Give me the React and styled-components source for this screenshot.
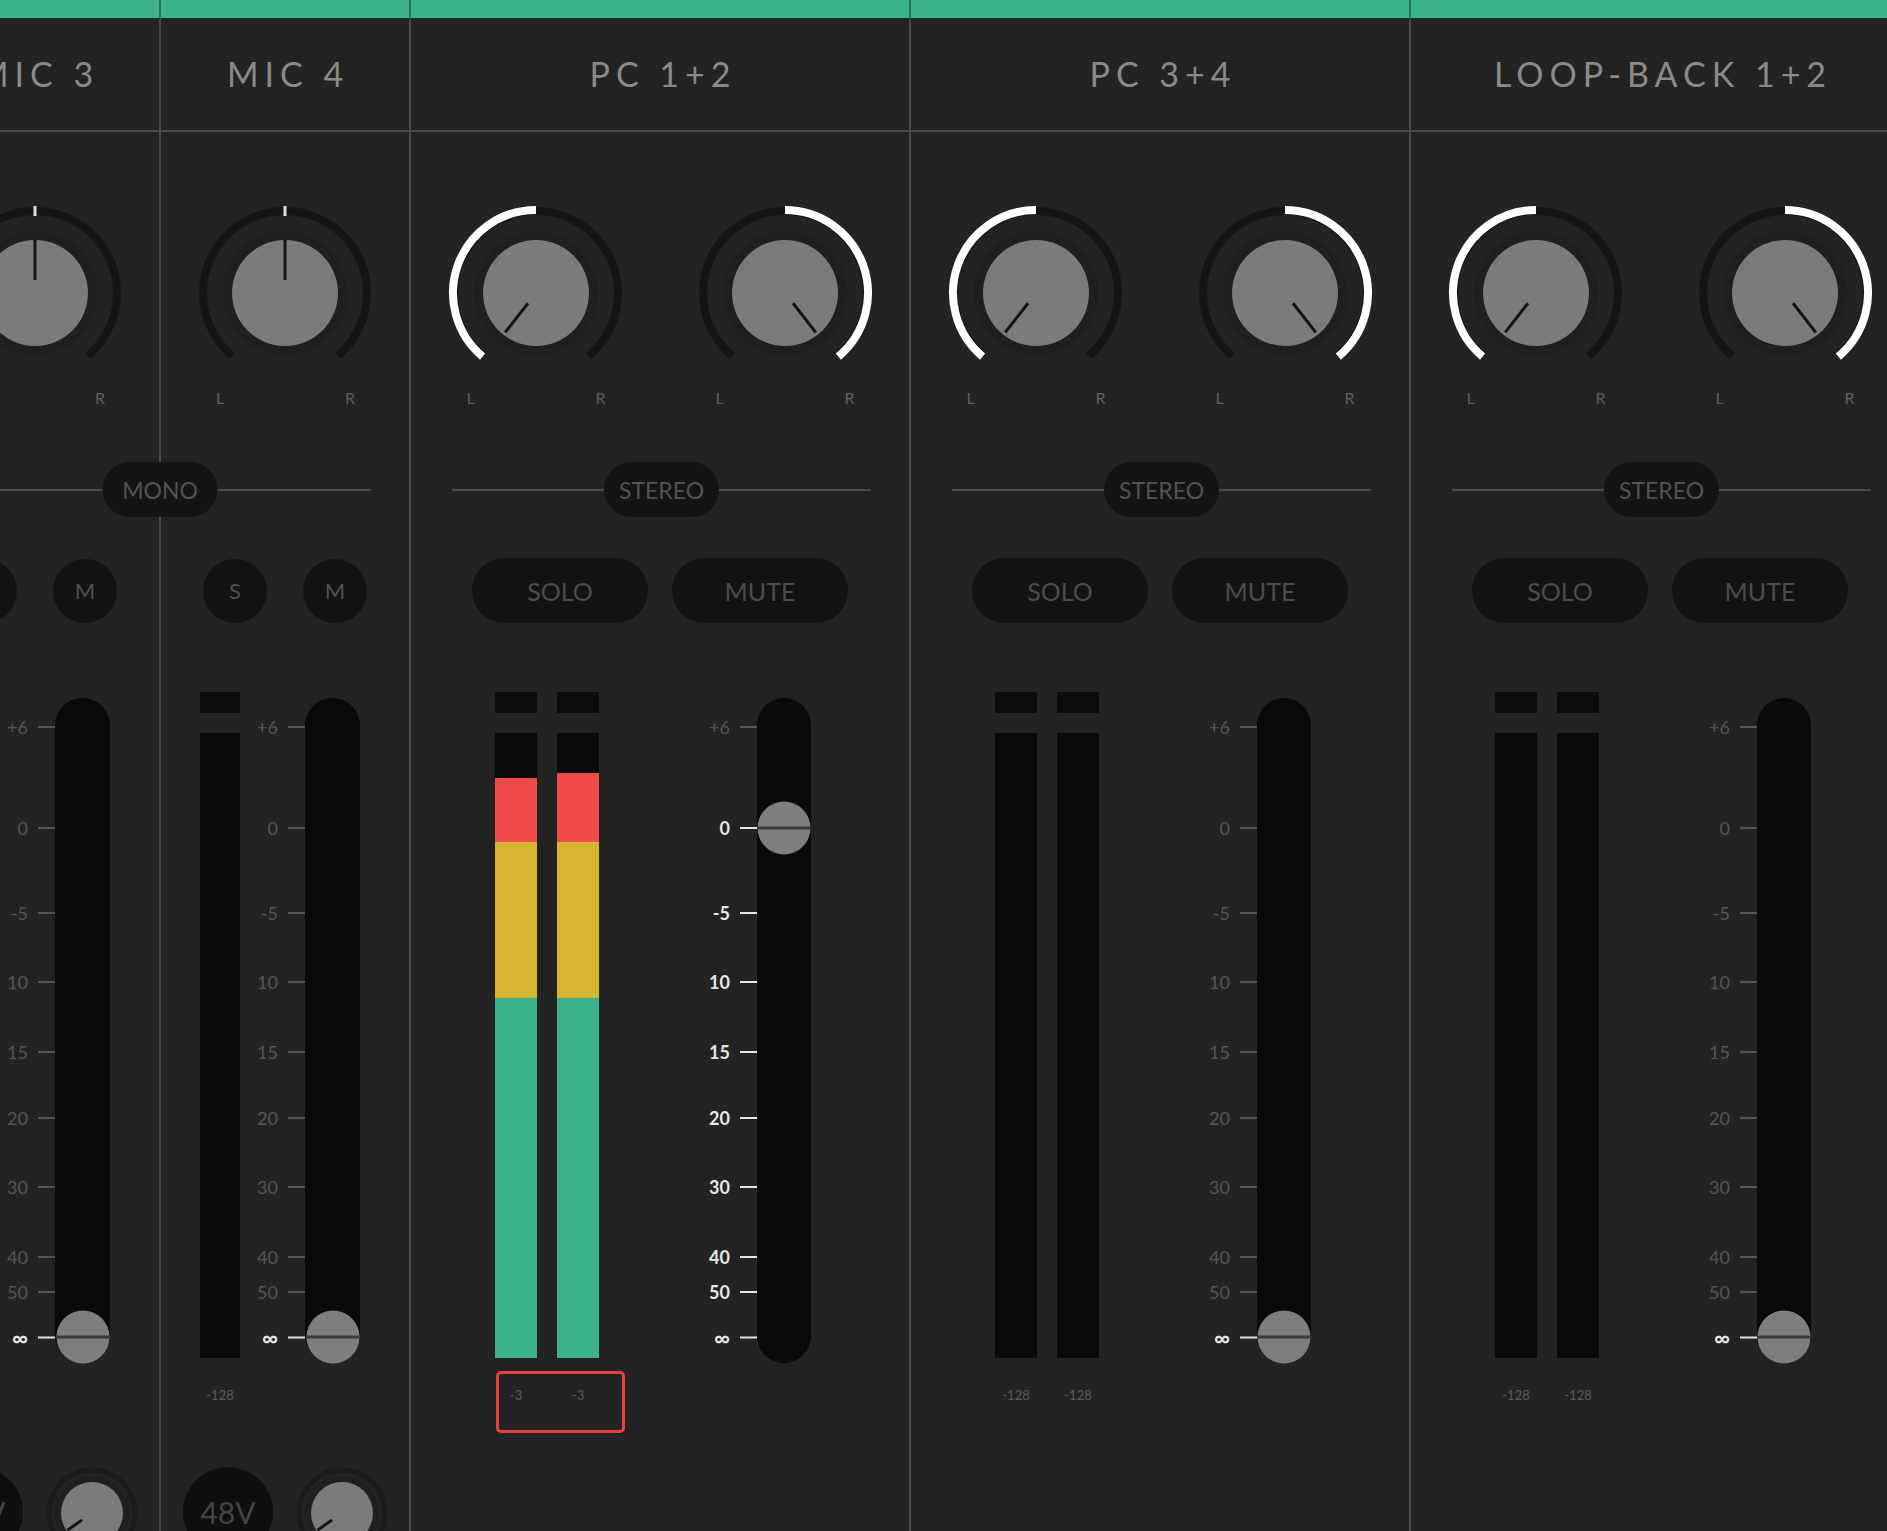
import React from "react"
import styled, { createGlobalStyle } from "styled-components"

const GlobalStyle = createGlobalStyle`
  html, body {
    margin: 0;
    padding: 0;
    background: #232323;
  }
  body {
    font-family: Lato, "Open Sans", "Liberation Sans", sans-serif;
    overflow: hidden;
  }
`

const Page = styled.div`
  height: 1531px;
  overflow: hidden;
  background: #232323;
`

const Rack = styled.div`
  display: flex;
  height: 100%;
  margin-left: -89px;
`

const Column = styled.div`
  width: ${props => props.$width}px;
  flex-shrink: 0;
  display: flex;
  flex-direction: column;
`

const GreenBar = styled.div`
  flex-shrink: 0;
  height: 18px;
  background: #3cb489;
  border-bottom: 2px solid #0f2c21;
  border-right: 2px solid #1f7555;
`

const Header = styled.div`
  flex-shrink: 0;
  height: 110px;
  display: flex;
  align-items: center;
  justify-content: center;
  border-bottom: 2px solid #4a4a4a;
  border-right: 2px solid #4a4a4a;
`

const Title = styled.h2`
  margin: 0 0 4px;
  padding-left: 6px;
  font-weight: 400;
  font-size: 34px;
  letter-spacing: 6px;
  color: #8a8a8a;
  white-space: nowrap;
`

const Body = styled.div`
  flex: 1 0 auto;
  display: flex;
  flex-direction: column;
  border-right: 2px solid #4a4a4a;
`

const KnobRow = styled.div`
  display: flex;
  justify-content: space-around;
  padding-top: 71px;
`

const KnobUnit = styled.div`
  width: 180px;
  display: flex;
  flex-direction: column;
  align-items: center;
`

const PanLabels = styled.div`
  width: 150px;
  height: 20px;
  margin-top: 4px;
  display: flex;
  justify-content: space-between;
  align-items: center;
  font-size: 16px;
  color: #5e5e5e;

  span {
    width: 20px;
    text-align: center;
  }
`

const LinkRow = styled.div`
  position: relative;
  flex-shrink: 0;
  height: 55px;
  margin-top: 55px;
  display: flex;
  align-items: center;
  padding: ${props => props.$pad};
`

const LinkLine = styled.div`
  flex: 1;
  height: 2px;
  background: #4b4b4b;
`

const Pill = styled.div`
  width: 115px;
  height: 55px;
  border-radius: 28px;
  background: #141414;
  color: #525252;
  font-size: 23px;
  display: flex;
  align-items: center;
  justify-content: center;
  flex-shrink: 0;
`

const EdgePill = styled(Pill)`
  position: absolute;
  left: -1px;
  top: 0;
  z-index: 1;
  transform: translateX(-50%);
`

const ButtonRow = styled.div`
  flex-shrink: 0;
  height: 65px;
  margin-top: 41px;
  display: flex;
  justify-content: center;
  align-items: center;
  gap: ${props => props.$gap}px;
`

const WideButton = styled.div`
  width: 176px;
  height: 65px;
  border-radius: 33px;
  background: #131313;
  color: #4c4c4c;
  font-size: 25px;
  display: flex;
  align-items: center;
  justify-content: center;
`

const RoundButton = styled.div`
  width: 64px;
  height: 64px;
  border-radius: 50%;
  background: #131313;
  color: #515151;
  font-size: 22px;
  display: flex;
  align-items: center;
  justify-content: center;
`

const Strip = styled.div`
  flex-shrink: 0;
  display: flex;
  align-items: flex-start;
  margin-top: 69px;
  padding-left: ${props => props.$pad}px;
`

const MeterGroup = styled.div`
  display: flex;
  flex-direction: column;
`

const MeterLine = styled.div`
  position: relative;
  display: flex;
  gap: 20px;
`

const ClipBox = styled.div`
  width: ${props => props.$width}px;
  height: 21px;
  background: #0c0c0e;
`

const MeterBar = styled.div`
  width: ${props => props.$width}px;
  height: 625px;
  margin-top: 20px;
  background: #0a0a0d;
  display: flex;
  flex-direction: column;
  justify-content: flex-end;
`

const MeterFill = styled.div`
  width: 100%;
  background: linear-gradient(to top, #3cb489 0 360px, #d5b530 360px 516px, #f04b4b 516px);
  background-size: 100% 625px;
  background-position: bottom;
`

const PeakLabels = styled(MeterLine)`
  margin-top: 28px;
  height: 18px;
  align-items: center;
`

const PeakLabel = styled.span`
  width: ${props => props.$width}px;
  text-align: center;
  font-size: 13px;
  color: #5c5c5c;
`

const Highlight = styled.div`
  position: absolute;
  left: 1px;
  top: -15px;
  width: 129px;
  height: 62px;
  box-sizing: border-box;
  border: 3px solid #e8403f;
  border-radius: 5px;
`

const Scale = styled.div`
  position: relative;
  width: 60px;
  height: 665px;
  margin-top: 6px;
  margin-left: ${props => props.$offset}px;
`

const Mark = styled.div`
  position: absolute;
  right: 0;
  display: flex;
  align-items: center;
  gap: 10px;
  transform: translateY(-50%);
  font-size: ${props => props.$inf ? 22 : 18}px;
  font-weight: ${props => props.$inf || props.$lit ? 700 : 400};
  color: ${props => props.$lit ? "#e6e6e6" : "#565656"};

  &::after {
    content: "";
    width: 17px;
    height: 2px;
    background: ${props => props.$lit ? "#e6e6e6" : "#565656"};
  }
`

const Track = styled.div`
  position: relative;
  width: ${props => props.$width}px;
  height: 665px;
  margin-top: 6px;
  border-radius: 28px;
  background: #0a0a0d;
`

const FaderCap = styled.div`
  position: absolute;
  left: 50%;
  width: 53px;
  height: 53px;
  border-radius: 50%;
  background: #7e7e7e;
  transform: translate(-50%, -50%);

  &::after {
    content: "";
    position: absolute;
    left: 0;
    right: 0;
    top: 25px;
    height: 3px;
    background: #3a3a3a;
  }
`

const BottomRow = styled.div`
  flex-shrink: 0;
  display: flex;
  gap: 23px;
  margin-top: 63px;
  padding-left: 22px;
`

const PhantomButton = styled.div`
  width: 90px;
  height: 90px;
  border-radius: 50%;
  background: #0f0f0f;
  color: #454545;
  font-size: 30px;
  display: flex;
  align-items: center;
  justify-content: center;
`

const marks = [
  { label: "+6", y: 29 },
  { label: "0", y: 130 },
  { label: "-5", y: 215 },
  { label: "10", y: 284 },
  { label: "15", y: 354 },
  { label: "20", y: 420 },
  { label: "30", y: 489 },
  { label: "40", y: 559 },
  { label: "50", y: 594 },
  { label: "∞", y: 639 }
]

const polar = (c, r, a) => {
  const rad = a * Math.PI / 180
  return [c + r * Math.sin(rad), c - r * Math.cos(rad)]
}

const arc = (c, r, a0, a1) => {
  const [x0, y0] = polar(c, r, a0)
  const [x1, y1] = polar(c, r, a1)
  return `M${x0} ${y0} A${r} ${r} 0 ${a1 - a0 > 180 ? 1 : 0} 1 ${x1} ${y1}`
}

const Pointer = ({ c, a, r0, r1 }) => {
  const [x0, y0] = polar(c, r0, a)
  const [x1, y1] = polar(c, r1, a)
  return <line x1={x0} y1={y0} x2={x1} y2={y1} stroke="#151515" strokeWidth="3" />
}

const PanKnob = ({ pan }) =>
  <svg width="180" height="180" viewBox="0 0 180 180">
    <path d={arc(90, 82, -140, 140)} fill="none" stroke="#151515" strokeWidth="8" />
    { pan < 0 && <path d={arc(90, 83, -140, 0)} fill="none" stroke="#ffffff" strokeWidth="8" /> }
    { pan > 0 && <path d={arc(90, 83, 0, 140)} fill="none" stroke="#ffffff" strokeWidth="8" /> }
    { pan === 0 && <rect x="88.5" y="3" width="3" height="10" fill="#dcdcdc" /> }
    <circle cx="90" cy="90" r="62" fill="#1f1f1f" />
    <circle cx="90" cy="90" r="53" fill="#7b7b7b" />
    { pan === 0
      ? <Pointer c={90} a={0} r0={13} r1={53} />
      : <Pointer c={90} a={pan < 0 ? -142 : 142} r0={13} r1={50} /> }
  </svg>

const GainKnob = () =>
  <svg width="92" height="92" viewBox="0 0 92 92">
    <circle cx="46" cy="46" r="43" fill="none" stroke="#1b1b1b" strokeWidth="5" />
    <circle cx="46" cy="46" r="37" fill="#1f1f1f" />
    <circle cx="46" cy="46" r="31" fill="#7b7b7b" />
    <Pointer c={46} a={-125} r0={12} r1={30} />
  </svg>

const Pan = ({ pan }) =>
  <KnobUnit>
    <PanKnob pan={ pan } />
    <PanLabels><span>L</span><span>R</span></PanLabels>
  </KnobUnit>

const FaderScale = ({ offset, position }) =>
  <Scale $offset={ offset }>
    { marks.map(m =>
      <Mark key={ m.label } style={{ top: m.y }} $lit={ m.y >= position } $inf={ m.label === "∞" }>
        { m.label }
      </Mark>
    ) }
  </Scale>

const Fader = ({ width, position }) =>
  <Track $width={ width }>
    <FaderCap style={{ top: position }} />
  </Track>

const Meters = ({ width, levels, peaks, flagged }) =>
  <MeterGroup>
    <MeterLine>
      { levels.map((_, i) => <ClipBox key={ i } $width={ width } />) }
    </MeterLine>
    <MeterLine>
      { levels.map((level, i) =>
        <MeterBar key={ i } $width={ width }>
          { level > 0 && <MeterFill style={{ height: level }} /> }
        </MeterBar>
      ) }
    </MeterLine>
    <PeakLabels>
      { peaks.map((p, i) => <PeakLabel key={ i } $width={ width }>{ p }</PeakLabel>) }
      { flagged && <Highlight /> }
    </PeakLabels>
  </MeterGroup>

const MicChannel = ({ title, first }) =>
  <Column $width={ 250 }>
    <GreenBar />
    <Header><Title>{ title }</Title></Header>
    <Body>
      <KnobRow><Pan pan={ 0 } /></KnobRow>
      <LinkRow $pad={ first ? "0 0 0 41px" : "0 38px 0 0" }>
        <LinkLine />
        { !first && <EdgePill>MONO</EdgePill> }
      </LinkRow>
      <ButtonRow $gap={ 36 }>
        <RoundButton>S</RoundButton>
        <RoundButton>M</RoundButton>
      </ButtonRow>
      <Strip $pad={ 39 }>
        <Meters width={ 40 } levels={ [0] } peaks={ ["-128"] } />
        <FaderScale offset={ 5 } position={ 639 } />
        <Fader width={ 55 } position={ 639 } />
      </Strip>
      <BottomRow>
        <PhantomButton>48V</PhantomButton>
        <GainKnob />
      </BottomRow>
    </Body>
  </Column>

const StereoChannel = ({ title, levels, peaks, position, flagged }) =>
  <Column $width={ 500 }>
    <GreenBar />
    <Header><Title>{ title }</Title></Header>
    <Body>
      <KnobRow>
        <Pan pan={ -1 } />
        <Pan pan={ 1 } />
      </KnobRow>
      <LinkRow $pad="0 38px 0 41px">
        <LinkLine />
        <Pill>STEREO</Pill>
        <LinkLine />
      </LinkRow>
      <ButtonRow $gap={ 24 }>
        <WideButton>SOLO</WideButton>
        <WideButton>MUTE</WideButton>
      </ButtonRow>
      <Strip $pad={ 84 }>
        <Meters width={ 42 } levels={ levels } peaks={ peaks } flagged={ flagged } />
        <FaderScale offset={ 98 } position={ position } />
        <Fader width={ 54 } position={ position } />
      </Strip>
    </Body>
  </Column>

export default function App() {
  return (
    <Page>
      <GlobalStyle />
      <Rack>
        <MicChannel title="MIC 3" first />
        <MicChannel title="MIC 4" />
        <StereoChannel title="PC 1+2" levels={ [580, 585] } peaks={ ["-3", "-3"] } position={ 130 } flagged />
        <StereoChannel title="PC 3+4" levels={ [0, 0] } peaks={ ["-128", "-128"] } position={ 639 } />
        <StereoChannel title="LOOP-BACK 1+2" levels={ [0, 0] } peaks={ ["-128", "-128"] } position={ 639 } />
      </Rack>
    </Page>
  )
}
